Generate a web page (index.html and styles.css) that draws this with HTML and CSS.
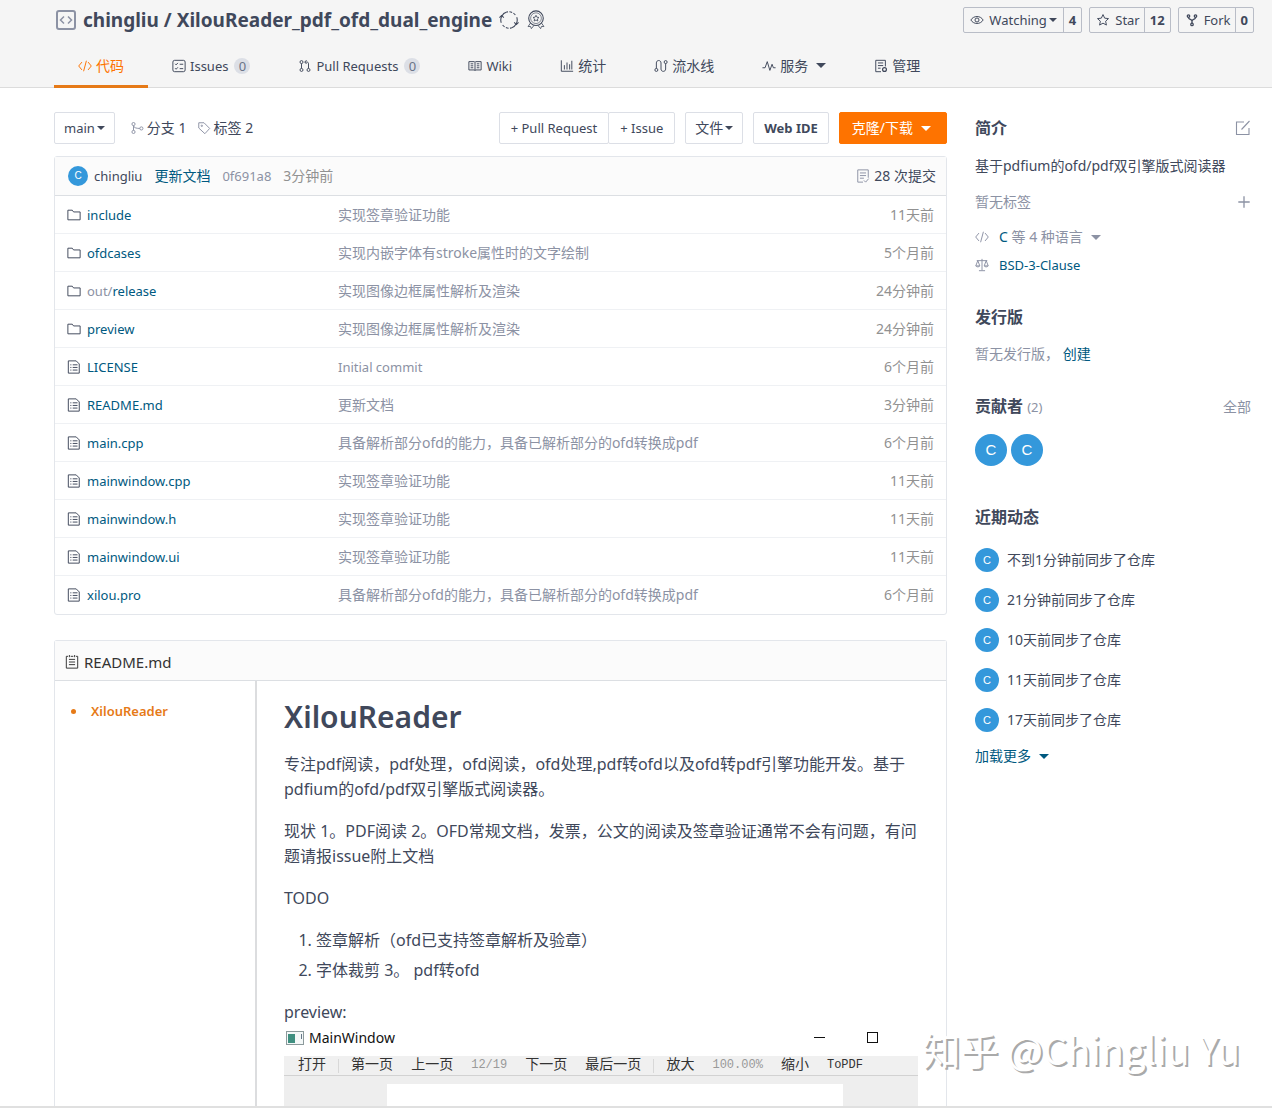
FILE: index.html
```html
<!DOCTYPE html>
<html lang="zh-CN">
<head>
<meta charset="utf-8">
<meta name="viewport" content="width=device-width, initial-scale=1">
<title>chingliu / XilouReader_pdf_ofd_dual_engine</title>
<link rel="stylesheet" href="styles.css">
</head>
<body>
<svg class="sprite" aria-hidden="true">
  <symbol id="i-repo" viewBox="0 0 20 20"><rect x="1" y="1" width="18" height="18" rx="2" stroke-width="2"/><path d="M8 6.500 4.500 10 8 13.500M12 6.500 15.500 10 12 13.500" stroke-width="1.500"/></symbol>
  <symbol id="i-sync" viewBox="0 0 22 22"><path d="M8.500 2.300A9 9 0 0 0 2.500 14M13.500 19.700A9 9 0 0 0 19.500 8" /><path d="M4 16.500A9 9 0 0 0 13.500 19.700M18 5.500A9 9 0 0 0 8.500 2.300" stroke-dasharray="3 1.500"/><path d="M.5 8.500 2.900 6l2.400 2.300M21.500 13.500 19.100 16l-2.400-2.300"/></symbol>
  <symbol id="i-medal" viewBox="0 0 20 22"><circle cx="10" cy="9" r="8"/><circle cx="10" cy="9" r="5.900" stroke-width=".7"/><path stroke-width=".9" d="m10 5.800 1 2.100 2.300.3-1.700 1.600.4 2.300-2-1.100-2 1.100.4-2.300-1.700-1.600 2.300-.3zM3.800 14.500l-2.500 3.700 2.700-.1.900 2.400 3.100-3.800M16.200 14.500l2.500 3.700-2.700-.1-.9 2.400-3.100-3.800"/></symbol>
  <symbol id="i-code" viewBox="0 0 16 16"><path d="M4.500 3.500.8 8l3.700 4.500M11.500 3.500 15.200 8l-3.700 4.500M9.600 2 6.400 14"/></symbol>
  <symbol id="i-issues" viewBox="0 0 16 16"><rect x="1" y="1.500" width="14" height="13" rx="2"/><path d="m3.500 5.500 1.200 1.200L6.700 4.500M3.500 10.500l1.200 1.200 2-2.200M8.800 6h4M8.800 11h4"/></symbol>
  <symbol id="i-pr" viewBox="0 0 16 16"><circle cx="4" cy="3.500" r="1.700"/><circle cx="4" cy="12.500" r="1.700"/><circle cx="12" cy="12.500" r="1.700"/><path d="M4 5.200v5.600M12 10.800V5.500c0-1.500-.7-2-2-2H8M9.800 1.300 7.600 3.500l2.200 2.200"/></symbol>
  <symbol id="i-wiki" viewBox="0 0 16 16"><path d="M1 3h6l1 .8L9 3h6v9.500H9l-1 .7-1-.7H1zM8 4v9M3 5.500h3M3 7.800h3M3 10h3M10 5.500h3M10 7.800h3M10 10h3"/></symbol>
  <symbol id="i-chart" viewBox="0 0 16 16"><path d="M1.500 1.500v12.500h13.500M5 7v5M8 4v8M11 6v6M13.500 2v10"/></symbol>
  <symbol id="i-pipe" viewBox="0 0 16 16"><circle cx="2.700" cy="12.500" r="1.700"/><circle cx="13.300" cy="3.500" r="1.700"/><path d="M2.700 10.800V4.500C2.700 .8 8 .8 8 4.500v7c0 3.500 5.300 3.500 5.300 0V5.200"/></symbol>
  <symbol id="i-pulse" viewBox="0 0 16 16"><path d="M.5 10h3L6 3l3 10 2.500-7 1.500 4h2.500"/></symbol>
  <symbol id="i-manage" viewBox="0 0 16 16"><path d="M8 14.500H2v-13h11v7M4.500 4.500h6M4.500 7.500h6M4.500 10.500h3"/><circle cx="12" cy="12" r="2.200" stroke-width="1.400"/></symbol>
  <symbol id="i-eye" viewBox="0 0 16 16"><path d="M1 8c3-5.300 11-5.300 14 0-3 5.300-11 5.300-14 0z"/><circle cx="8" cy="8" r="2.300"/></symbol>
  <symbol id="i-star" viewBox="0 0 16 16"><path d="m8 1.800 1.900 4.100 4.400.5-3.300 3 .9 4.400L8 11.600l-3.900 2.200.9-4.400-3.300-3 4.400-.5z"/></symbol>
  <symbol id="i-fork" viewBox="0 0 16 16"><g stroke-width="1.500"><circle cx="4" cy="3.500" r="1.400"/><circle cx="12" cy="3.500" r="1.400"/><circle cx="8" cy="13" r="1.400"/><path d="M4 5c0 2.700 4 2 4 4.300v2.200M12 5c0 2.700-4 2-4 4.300"/></g></symbol>
  <symbol id="i-branch" viewBox="0 0 16 16"><circle cx="4" cy="3.500" r="1.800"/><circle cx="4" cy="12.500" r="1.800"/><circle cx="13" cy="8.500" r="1.800"/><path d="M4 5.300v5.400M4 5.500c.5 2.500 4 3 7.200 3"/></symbol>
  <symbol id="i-tag" viewBox="0 0 16 16"><path d="M2 2h6l6.500 6.500-5.500 6L2 8z"/><circle cx="5.500" cy="5.500" r=".8"/></symbol>
  <symbol id="i-folder" viewBox="0 0 16 16"><path d="M1 13.500v-11h5l1.500 2H15v9z"/></symbol>
  <symbol id="i-file" viewBox="0 0 16 16"><path d="M1.500 1h9L14 4.500V15H1.500zM6.500 5.500H12M6.500 8.500H12M6.500 11.500H12M3.800 5.500H5M3.800 8.500H5M3.800 11.500H5"/></symbol>
  <symbol id="i-commit" viewBox="0 0 16 16"><path d="M8 15H2V1h12v9M4.500 4.500h7M4.500 7.500h7M4.500 10.500H9M9 13l2 2 3.500-4"/></symbol>
  <symbol id="i-readme" viewBox="0 0 16 16"><path d="M3.500 1.500H1.500V15h13V1.500h-2M6.500 1.500h3M4.500 5h7M4.500 8h7M4.500 11h7M5 0v2.500M11 0v2.500"/></symbol>
  <symbol id="i-edit" viewBox="0 0 16 16"><path d="M9 2H1.500v12.500H14V8M6.500 9.500l8-8.500"/></symbol>
  <symbol id="i-plus" viewBox="0 0 16 16"><path d="M8 1.500v13M1.500 8h13" stroke-width="1.500"/></symbol>
  <symbol id="i-law" viewBox="0 0 16 16"><path d="M8 1v13M4.500 14.500h7M2 3h12M3.200 3 .9 9h4.600zM12.800 3l-2.300 6h4.600zM.9 9c1 1.500 3.600 1.500 4.600 0M10.500 9c1 1.500 3.600 1.500 4.600 0"/></symbol>
</svg>

<header class="repo-header">
  <div class="repo-top">
    <h1 class="repo-title">
      <svg class="icon icon-20 muted"><use href="#i-repo"/></svg>
      <span><a href="#">chingliu</a> / <a href="#">XilouReader_pdf_ofd_dual_engine</a></span>
      <svg class="icon icon-20"><use href="#i-sync"/></svg>
      <svg class="icon icon-20"><use href="#i-medal"/></svg>
    </h1>
    <div class="repo-actions">
      <div class="counter"><button type="button"><svg class="icon icon-14"><use href="#i-eye"/></svg><span>Watching</span><i class="caret"></i></button><a href="#">4</a></div>
      <div class="counter"><button type="button"><svg class="icon icon-14"><use href="#i-star"/></svg>Star</button><a href="#">12</a></div>
      <div class="counter"><button type="button"><svg class="icon icon-14"><use href="#i-fork"/></svg>Fork</button><a href="#">0</a></div>
    </div>
  </div>
  <nav class="tabs">
    <a class="tab active" href="#"><svg class="icon icon-14"><use href="#i-code"/></svg>代码</a>
    <a class="tab latin" href="#"><svg class="icon icon-14"><use href="#i-issues"/></svg>Issues<span class="badge">0</span></a>
    <a class="tab latin" href="#"><svg class="icon icon-14"><use href="#i-pr"/></svg>Pull Requests<span class="badge">0</span></a>
    <a class="tab latin" href="#"><svg class="icon icon-14"><use href="#i-wiki"/></svg>Wiki</a>
    <a class="tab" href="#"><svg class="icon icon-14"><use href="#i-chart"/></svg>统计</a>
    <a class="tab" href="#"><svg class="icon icon-14"><use href="#i-pipe"/></svg>流水线</a>
    <a class="tab" href="#"><svg class="icon icon-14"><use href="#i-pulse"/></svg>服务<i class="caret caret-lg"></i></a>
    <a class="tab" href="#"><svg class="icon icon-14"><use href="#i-manage"/></svg>管理</a>
  </nav>
</header>

<div class="layout">
  <main class="content">
    <div class="toolbar">
      <button type="button" class="btn latin">main<i class="caret"></i></button>
      <a class="ref-link" href="#"><svg class="icon icon-14 muted"><use href="#i-branch"/></svg>分支 1</a>
      <a class="ref-link" href="#"><svg class="icon icon-14 muted"><use href="#i-tag"/></svg>标签 2</a>
      <div class="toolbar-right">
        <div class="btn-group"><button type="button" class="btn latin">+ Pull Request</button><button type="button" class="btn latin">+ Issue</button></div>
        <button type="button" class="btn">文件<i class="caret"></i></button>
        <button type="button" class="btn latin strong">Web IDE</button>
        <button type="button" class="btn primary">克隆/下载<i class="caret caret-lg"></i></button>
      </div>
    </div>

    <section class="box">
      <div class="commit-bar">
        <span class="avatar avatar-20">C</span>
        <a class="author latin" href="#">chingliu</a>
        <a class="link" href="#">更新文档</a>
        <span class="muted latin">0f691a8</span>
        <span class="time">3分钟前</span>
        <a class="commit-count" href="#"><svg class="icon icon-14 muted"><use href="#i-commit"/></svg>28 次提交</a>
      </div>
      <table class="files">
        <tbody>
        <tr><td class="name"><div><svg class="icon icon-14"><use href="#i-folder"/></svg><a href="#">include</a></div></td><td class="msg">实现签章验证功能</td><td class="time">11天前</td></tr>
        <tr><td class="name"><div><svg class="icon icon-14"><use href="#i-folder"/></svg><a href="#">ofdcases</a></div></td><td class="msg">实现内嵌字体有stroke属性时的文字绘制</td><td class="time">5个月前</td></tr>
        <tr><td class="name"><div><svg class="icon icon-14"><use href="#i-folder"/></svg><a href="#"><span class="muted">out/</span>release</a></div></td><td class="msg">实现图像边框属性解析及渲染</td><td class="time">24分钟前</td></tr>
        <tr><td class="name"><div><svg class="icon icon-14"><use href="#i-folder"/></svg><a href="#">preview</a></div></td><td class="msg">实现图像边框属性解析及渲染</td><td class="time">24分钟前</td></tr>
        <tr><td class="name"><div><svg class="icon icon-14"><use href="#i-file"/></svg><a href="#">LICENSE</a></div></td><td class="msg latin">Initial commit</td><td class="time">6个月前</td></tr>
        <tr><td class="name"><div><svg class="icon icon-14"><use href="#i-file"/></svg><a href="#">README.md</a></div></td><td class="msg">更新文档</td><td class="time">3分钟前</td></tr>
        <tr><td class="name"><div><svg class="icon icon-14"><use href="#i-file"/></svg><a href="#">main.cpp</a></div></td><td class="msg">具备解析部分ofd的能力，具备已解析部分的ofd转换成pdf</td><td class="time">6个月前</td></tr>
        <tr><td class="name"><div><svg class="icon icon-14"><use href="#i-file"/></svg><a href="#">mainwindow.cpp</a></div></td><td class="msg">实现签章验证功能</td><td class="time">11天前</td></tr>
        <tr><td class="name"><div><svg class="icon icon-14"><use href="#i-file"/></svg><a href="#">mainwindow.h</a></div></td><td class="msg">实现签章验证功能</td><td class="time">11天前</td></tr>
        <tr><td class="name"><div><svg class="icon icon-14"><use href="#i-file"/></svg><a href="#">mainwindow.ui</a></div></td><td class="msg">实现签章验证功能</td><td class="time">11天前</td></tr>
        <tr><td class="name"><div><svg class="icon icon-14"><use href="#i-file"/></svg><a href="#">xilou.pro</a></div></td><td class="msg">具备解析部分ofd的能力，具备已解析部分的ofd转换成pdf</td><td class="time">6个月前</td></tr>
        </tbody>
      </table>
    </section>

    <section class="box readme">
      <div class="readme-head"><svg class="icon icon-14"><use href="#i-readme"/></svg>README.md</div>
      <div class="readme-body">
        <nav class="toc"><ul><li><a href="#xiloureader">XilouReader</a></li></ul></nav>
        <article class="markdown">
          <h1 id="xiloureader">XilouReader</h1>
          <p>专注pdf阅读，pdf处理，ofd阅读，ofd处理,pdf转ofd以及ofd转pdf引擎功能开发。基于pdfium的ofd/pdf双引擎版式阅读器。</p>
          <p>现状 1。PDF阅读 2。OFD常规文档，发票，公文的阅读及签章验证通常不会有问题，有问题请报issue附上文档</p>
          <p>TODO</p>
          <ol>
            <li>签章解析（ofd已支持签章解析及验章）</li>
            <li>字体裁剪 3。 pdf转ofd</li>
          </ol>
          <div>preview:</div>
          <figure class="app">
            <div class="app-title">
              <svg class="app-icon" viewBox="0 0 18 14"><rect x=".5" y=".5" width="17" height="13" fill="#f4f8f8" stroke="#8c9a9c"/><rect x="2" y="3" width="7" height="9" fill="#3f8f80"/><path d="M15.500 3v5" stroke="#678"/></svg>
              <span>MainWindow</span>
              <i class="win-min"></i><i class="win-max"></i>
            </div>
            <div class="app-bar"><span>打开</span><i class="sep"></i><span>第一页</span><span>上一页</span><span class="dim">12/19</span><span>下一页</span><span>最后一页</span><i class="sep"></i><span>放大</span><span class="dim">100.00%</span><span>缩小</span><span class="mono">ToPDF</span></div>
            <div class="app-canvas"><div class="sheet"></div></div>
          </figure>
        </article>
      </div>
    </section>
  </main>

  <aside class="sidebar">
    <section class="about">
      <div class="side-head"><h2>简介</h2><a href="#" aria-label="编辑"><svg class="icon icon-16"><use href="#i-edit"/></svg></a></div>
      <p>基于pdfium的ofd/pdf双引擎版式阅读器</p>
      <div class="side-row"><span class="muted">暂无标签</span><a href="#" aria-label="添加标签"><svg class="icon icon-14"><use href="#i-plus"/></svg></a></div>
      <ul class="facts">
        <li><svg class="icon icon-14"><use href="#i-code"/></svg><span><a class="link" href="#">C</a> 等 4 种语言</span><i class="caret caret-lg"></i></li>
        <li><svg class="icon icon-14"><use href="#i-law"/></svg><a class="link latin" href="#">BSD-3-Clause</a></li>
      </ul>
    </section>
    <section>
      <h2>发行版</h2>
      <p class="muted">暂无发行版， <a class="link" href="#">创建</a></p>
    </section>
    <section>
      <div class="side-row"><h2>贡献者 <small>(2)</small></h2><a class="muted" href="#">全部</a></div>
      <div class="people"><span class="avatar avatar-32">C</span><span class="avatar avatar-32">C</span></div>
    </section>
    <section>
      <h2>近期动态</h2>
      <ul class="events">
        <li><span class="avatar avatar-24">C</span>不到1分钟前同步了仓库</li>
        <li><span class="avatar avatar-24">C</span>21分钟前同步了仓库</li>
        <li><span class="avatar avatar-24">C</span>10天前同步了仓库</li>
        <li><span class="avatar avatar-24">C</span>11天前同步了仓库</li>
        <li><span class="avatar avatar-24">C</span>17天前同步了仓库</li>
      </ul>
      <a class="more link" href="#">加载更多<i class="caret caret-lg"></i></a>
    </section>
  </aside>
</div>
<div class="page-end"></div>
<div class="watermark">知乎 @Chingliu Yu</div>
</body>
</html>
```
FILE: styles.css
```css
* { box-sizing: border-box; }
body {
  margin: 0;
  position: relative;
  background: #fff;
  color: #40485b;
  font: 14px/20px "Noto Sans", "Noto Sans CJK SC", sans-serif;
}
h1, h2, p, ul, ol, figure { margin: 0; padding: 0; }
ul { list-style: none; }
a { color: inherit; text-decoration: none; }
button { font: inherit; color: inherit; background: none; border: 0; padding: 0; margin: 0; cursor: pointer; }
.sprite { display: none; }
.latin { font-size: 13px; }
.muted { color: #8c92a4; }
.link { color: #005980; }
.time { color: #919191; }

.icon { flex: none; fill: none; stroke: currentColor; stroke-width: 1.1; }
.icon-14 { width: 14px; height: 14px; }
.icon-16 { width: 16px; height: 16px; }
.icon-20 { width: 20px; height: 20px; }
.side-head a, .side-row a { display: flex; }
.caret { flex: none; border: 4px solid transparent; border-top-color: currentColor; border-bottom: 0; }
.caret-lg { border-width: 5px; border-bottom: 0; }
.avatar {
  display: inline-flex; flex: none; align-items: center; justify-content: center;
  border-radius: 50%; background: #3498db; color: #fff;
  font-family: "Liberation Sans", Arial, sans-serif;
}
.avatar-20 { width: 20px; height: 20px; font-size: 10px; }
.avatar-24 { width: 24px; height: 24px; font-size: 11px; }
.avatar-32 { width: 32px; height: 32px; font-size: 15px; }

.repo-header { background: #f5f5f5; border-bottom: 1px solid #dcdcdc; padding: 0 18px 0 54px; }
.repo-top { display: flex; justify-content: space-between; align-items: center; height: 40px; }
.repo-title { display: flex; align-items: center; gap: 7px; padding-left: 2px; font-size: 19px; line-height: 28px; }
.repo-title .icon { stroke-width: 1.2; }
.repo-actions { display: flex; gap: 7px; }
.counter { display: flex; height: 26px; border: 1px solid #b9bdc7; border-radius: 2px; font-size: 13px; }
.counter button { display: flex; align-items: center; gap: 5px; padding: 0 4px 0 6px; }
.counter button span { margin-right: -3px; }
.counter .caret { margin-right: 2px; }
.counter a { display: flex; align-items: center; border-left: 1px solid #b9bdc7; padding: 0 5px; font-weight: 700; }
.tabs { display: flex; height: 48px; margin-bottom: -1px; padding-top: 4px; }
.tab { display: flex; align-items: center; gap: 4px; padding: 2px 24px 0; border-bottom: 3px solid transparent; }
.tab.active { color: #fe7300; border-color: #e67a17; }
.tab .caret { margin-left: 4px; }
.badge { margin-left: 2px; min-width: 16px; border-radius: 8px; background: #dcdfe6; color: #6b7488; line-height: 16px; text-align: center; }

.layout { display: flex; gap: 28px; padding: 24px 21px 0 54px; }
.content { flex: 1; min-width: 0; }
.sidebar { flex: none; width: 276px; }

.toolbar { display: flex; align-items: center; gap: 10px; height: 32px; margin-bottom: 12px; }
.btn { display: inline-flex; align-items: center; gap: 2px; height: 32px; padding: 0 9px; border: 1px solid #dcdfe6; border-radius: 2px; background: #fff; white-space: nowrap; }
.btn.strong { padding: 0 10px; font-weight: 700; }
.btn.primary { padding: 0 15px 0 12px; gap: 8px; background: #fe7300; border-color: #fe7300; color: #fff; }
.btn-group { display: flex; }
.btn-group .btn { padding: 0 11px; }
.btn-group .btn + .btn { margin-left: -1px; }
.ref-link { display: flex; align-items: center; gap: 3px; }
.toolbar .btn + .ref-link { margin-left: 5px; }
.toolbar-right { display: flex; gap: 10px; margin-left: auto; }

.box { border: 1px solid #e3e6eb; border-radius: 3px; }
.commit-bar { display: flex; align-items: center; gap: 12px; height: 39px; padding: 0 10px 0 13px; background: #fbfbfb; border-bottom: 1px solid #dcdfe3; }
.commit-bar .author { margin-left: -6px; }
.commit-count { display: flex; align-items: center; gap: 4px; margin-left: auto; }
.files { width: 100%; border-collapse: separate; border-spacing: 0; table-layout: fixed; }
.files td { height: 38px; padding: 0; border-bottom: 1px solid #eff1f4; white-space: nowrap; }
.files tr:last-child td { border-bottom: 0; }
.files .name { width: 283px; padding-left: 12px; font-size: 13px; color: #40485b; }
.files .name div { display: flex; align-items: center; gap: 6px; }
.files .name a { color: #005980; }
.files .name .muted { color: #8c92a4; }
.files .msg { color: #8c92a4; }
.files .time { width: 100px; padding-right: 12px; text-align: right; }

.readme { margin-top: 25px; border-bottom: 0; border-radius: 3px 3px 0 0; }
.readme-head { display: flex; align-items: center; gap: 5px; height: 40px; padding: 2px 10px 0; background: #fbfbfb; border-bottom: 1px solid #dcdfe3; font-size: 15px; color: #333; }
.readme-body { display: flex; }
.toc { flex: none; width: 202px; border-right: 2px solid #dcdddf; padding: 20px 0 0 16px; color: #e67a17; font-size: 13px; font-weight: 600; }
.toc li { display: flex; align-items: center; gap: 15px; }
.toc li::before { content: ""; width: 5px; height: 5px; border-radius: 50%; background: currentColor; }
.markdown { flex: 1; min-width: 0; padding: 14px 28px 0 27px; font-size: 16px; line-height: 25px; }
.markdown h1 { margin-bottom: 13px; font-size: 30px; line-height: 44px; font-weight: 600; }
.markdown p, .markdown ol { margin-bottom: 17px; }
.markdown ol { padding-left: 32px; }
.markdown li + li { margin-top: 5px; }

.app { color: #111; }
.app-title { display: flex; align-items: center; height: 31px; padding: 0 40px 6px 2px; font-size: 14px; }
.app-icon { width: 18px; height: 14px; margin-right: 5px; }
.win-min { width: 11px; height: 1px; margin-left: auto; background: #111; }
.win-max { width: 11px; height: 11px; margin-left: 42px; border: 1px solid #111; }
.app-bar { display: flex; align-items: center; justify-content: space-between; height: 20px; padding: 0 55px 0 14px; background: #f0f0f0; border-bottom: 1px solid #d2d2d2; font: 14px/19px "Liberation Mono", "Noto Sans CJK SC", monospace; color: #333; white-space: nowrap; }
.app-bar .dim, .app-bar .mono { font-size: 12px; }
.app-bar .dim { color: #999; }
.app-bar .sep { width: 1px; height: 14px; margin: 0 -6px; background: #d8d8d8; }
.app-canvas { padding: 8px 75px 0 103px; background: #eee; }
.sheet { height: 22px; background: #fff; }
.page-end { height: 3px; background: #f3f3f3; border-top: 2px solid #e0e0e0; }

.side-head, .side-row { display: flex; align-items: center; justify-content: space-between; color: #8c92a4; }
.sidebar h2 { font-size: 16px; line-height: 24px; font-weight: 700; color: #40485b; }
.sidebar h2 small { font-size: 13px; font-weight: 400; color: #8c92a4; }
.sidebar section + section { margin-top: 30px; }
.sidebar section > p { margin-top: 15px; }
.side-head { height: 32px; }
.about p { margin-bottom: 16px; }
.sidebar .about > p { margin-top: 12px; }
.facts { margin-top: 15px; color: #8c92a4; }
.facts li { display: flex; align-items: center; gap: 10px; height: 20px; margin-bottom: 8px; }
.facts .caret { margin-left: -2px; }
.people { display: flex; gap: 4px; margin-top: 15px; }
.sidebar section:last-child { margin-top: 39px; }
.events { margin: 11px 0 6px; }
.events li { display: flex; align-items: center; gap: 8px; height: 40px; }
.more { display: flex; align-items: center; gap: 8px; }

.watermark { position: absolute; right: 32px; bottom: 32px; font: 38px/56px "Noto Sans CJK SC", sans-serif; color: #fff; text-shadow: 2px 2px 0 #aaa; white-space: nowrap; }
```
